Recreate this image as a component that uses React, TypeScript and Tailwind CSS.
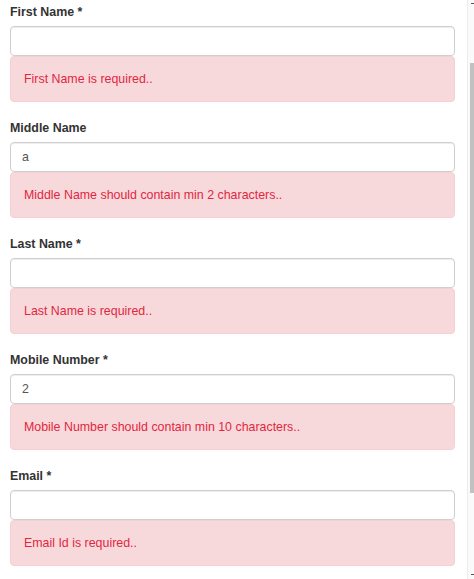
import React from "react";

const fields = [
  { label: "First Name *", value: "", error: "First Name is required.." },
  { label: "Middle Name", value: "a", error: "Middle Name should contain min 2 characters.." },
  { label: "Last Name *", value: "", error: "Last Name is required.." },
  { label: "Mobile Number *", value: "2", error: "Mobile Number should contain min 10 characters.." },
  { label: "Email *", value: "", error: "Email Id is required.." },
];

export default function App() {
  return (
    <div
      className="flex h-[579px] w-[474px] overflow-hidden bg-white"
      style={{ fontFamily: '"Liberation Sans", Arial, sans-serif' }}
    >
      <div className="flex w-[467px] flex-col pl-[10px] pr-[12px] pt-[4px]">
        {fields.map((f) => (
          <div key={f.label} className="mb-[18px] flex flex-col">
            <label className="mb-[5px] h-[17px] text-[12.4px] font-bold leading-[17px] text-[#333]">
              {f.label}
            </label>
            <div className="flex h-[30px] items-center rounded-[4px] border border-[#cfcfcf] bg-white px-[11px] text-[12.4px] text-[#555] shadow-[inset_0_1px_1px_rgba(0,0,0,0.075)]">
              {f.value}
            </div>
            <div className="flex h-[46px] items-center rounded-[4px] border border-[#f5cfd3] bg-[#f7d9dc] px-[13px] text-[12.4px] text-[#e3263f]">
              {f.error}
            </div>
          </div>
        ))}
      </div>
      <div className="flex w-[7px] flex-col border-l border-[#ececec] bg-[#fafafa]">
        <div className="mt-[3px] ml-[3px] h-[1px] w-[3px] bg-[#555]" />
        <div className="mt-[59px] ml-[2px] h-[430px] w-[4px] bg-[#c1c1c1]" />
        <div className="flex-1" />
        <div className="mb-[4px] ml-[3px] h-[1px] w-[3px] bg-[#555]" />
      </div>
    </div>
  );
}
